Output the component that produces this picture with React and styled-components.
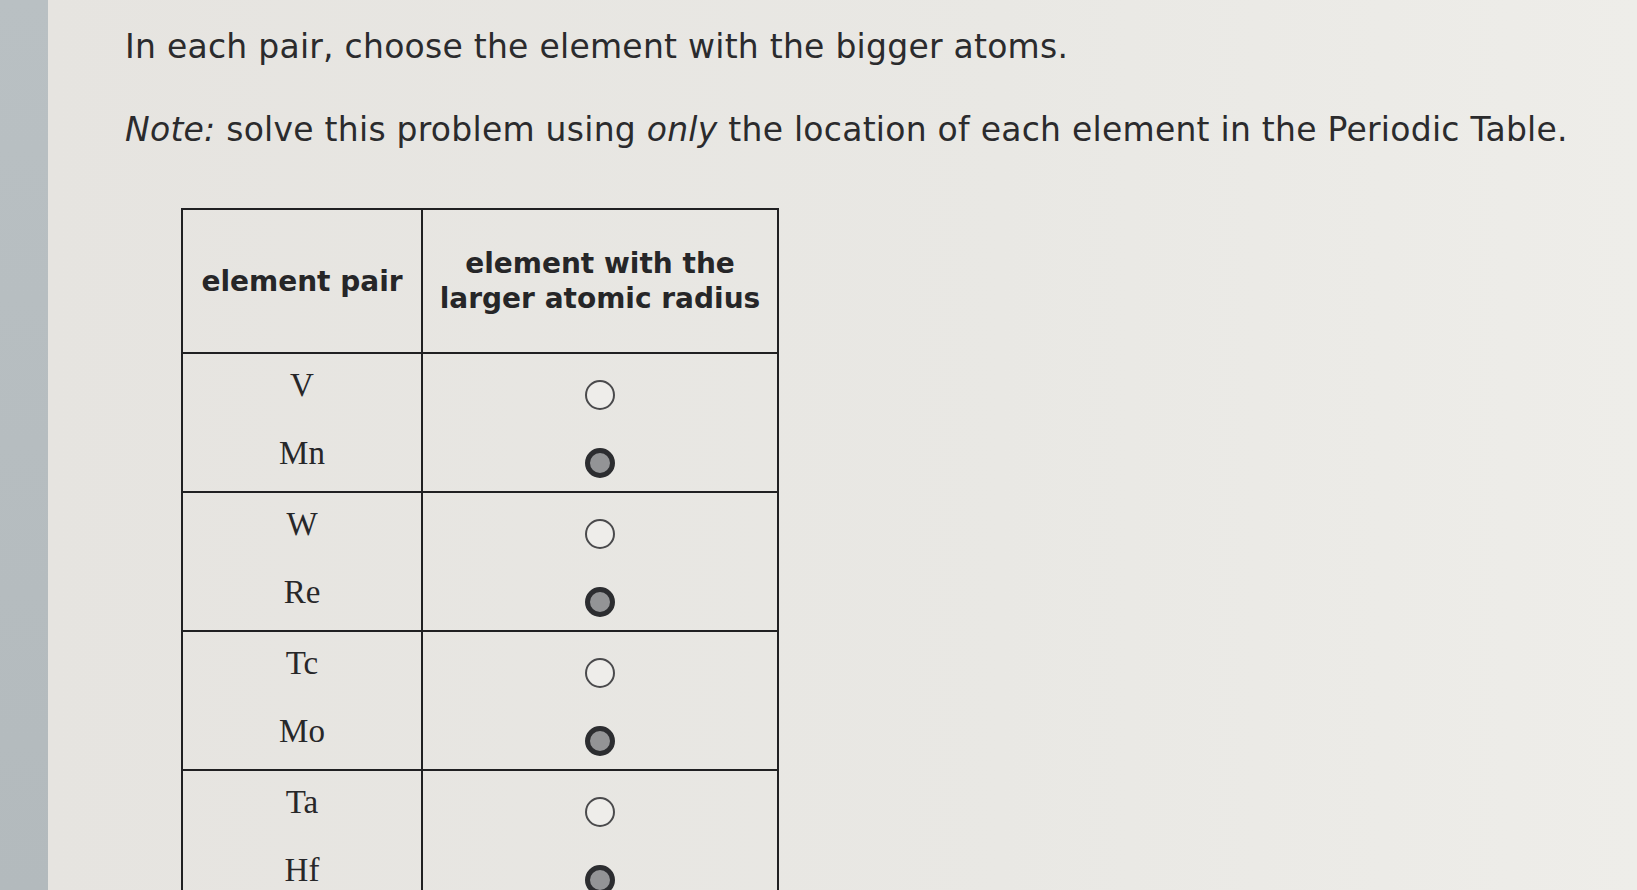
import React from "react";
import styled, { createGlobalStyle } from "styled-components";

const Global = createGlobalStyle`
  html, body { margin: 0; padding: 0; }
  body {
    width: 1637px;
    height: 890px;
    overflow: hidden;
    background: #e7e5e1;
    font-family: "DejaVu Sans", Verdana, sans-serif;
  }
`;

const Screen = styled.div`
  display: flex;
  width: 1637px;
  height: 890px;
  overflow: hidden;
`;

const Bezel = styled.div`
  width: 48px;
  flex: none;
  background: linear-gradient(180deg, #b9c0c3 0%, #b3babd 100%);
`;

const Page = styled.main`
  flex: 1;
  padding: 26px 0 0 77px;
  background: linear-gradient(90deg, #e6e4e0 0%, #e9e8e4 60%, #eeede9 100%);
  color: #2b2b2d;
`;

const Prompt = styled.p`
  margin: 0;
  font-size: 33px;
  line-height: 42px;
  letter-spacing: 0.25px;
`;

const Note = styled(Prompt)`
  margin-top: 41px;
`;

const Table = styled.table`
  margin: 57px 0 0 56px;
  border-collapse: collapse;
  border: 2px solid #202022;
`;

const HeadCell = styled.th`
  border: 2px solid #202022;
  height: 142px;
  width: ${(p) => p.$w}px;
  padding: 0;
  font-size: 28px;
  line-height: 35px;
  font-weight: bold;
  color: #262628;
  text-align: center;
  vertical-align: middle;
`;

const Cell = styled.td`
  border: 2px solid #202022;
  height: 137px;
  padding: 0;
  vertical-align: top;
`;

const Stack = styled.div`
  display: flex;
  flex-direction: column;
  align-items: center;
  padding-top: ${(p) => p.$top}px;
  gap: ${(p) => p.$gap}px;
`;

const Symbol = styled.span`
  font-family: "Liberation Serif", "Times New Roman", serif;
  font-size: 33px;
  line-height: 34px;
  height: 34px;
  color: #272729;
`;

const Radio = styled.span`
  display: block;
  box-sizing: border-box;
  width: 30px;
  height: 30px;
  border-radius: 50%;
  border: ${(p) => (p.$checked ? "5px solid #2c2d30" : "2px solid #4a4a4c")};
  background: ${(p) => (p.$checked ? "#939496" : "#eeedea")};
`;

const pairs = [
  ["V", "Mn"],
  ["W", "Re"],
  ["Tc", "Mo"],
  ["Ta", "Hf"],
];

export default function App() {
  return (
    <>
      <Global />
      <Screen>
        <Bezel />
        <Page>
          <Prompt>In each pair, choose the element with the bigger atoms.</Prompt>
          <Note>
            <i>Note:</i> solve this problem using <i>only</i> the location of each element in the Periodic Table.
          </Note>
          <Table>
            <thead>
              <tr>
                <HeadCell $w={238}>element pair</HeadCell>
                <HeadCell $w={354}>
                  element with the
                  <br />
                  larger atomic radius
                </HeadCell>
              </tr>
            </thead>
            <tbody>
              {pairs.map(([a, b]) => (
                <tr key={a}>
                  <Cell>
                    <Stack $top={14} $gap={34}>
                      <Symbol>{a}</Symbol>
                      <Symbol>{b}</Symbol>
                    </Stack>
                  </Cell>
                  <Cell>
                    <Stack $top={26} $gap={38}>
                      <Radio />
                      <Radio $checked />
                    </Stack>
                  </Cell>
                </tr>
              ))}
            </tbody>
          </Table>
        </Page>
      </Screen>
    </>
  );
}
